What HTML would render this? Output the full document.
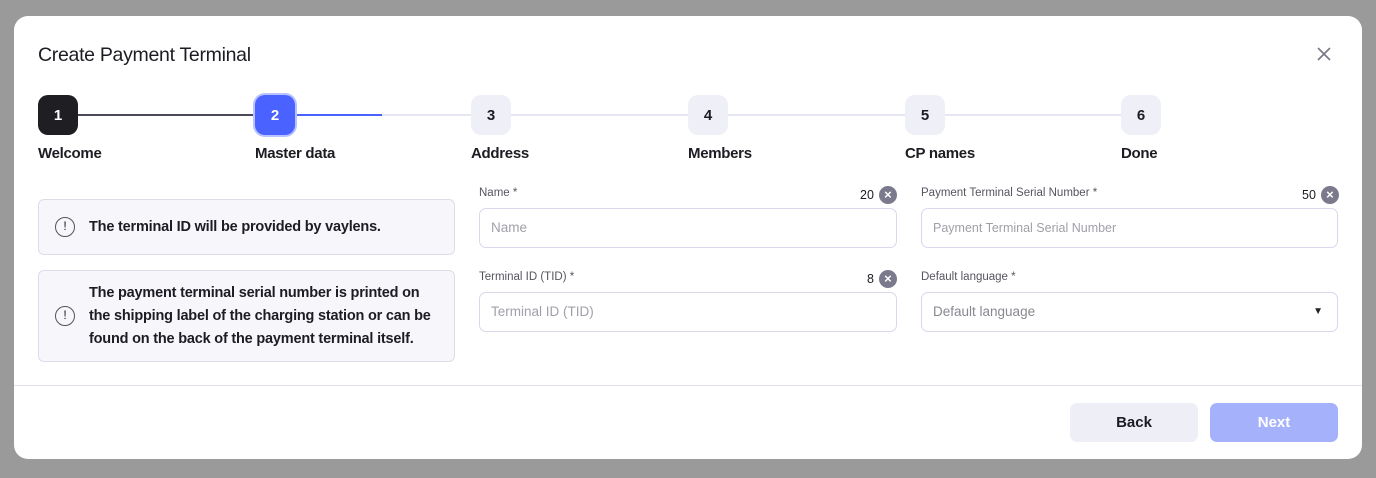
<!DOCTYPE html><html><head><style>
*{box-sizing:border-box;margin:0;padding:0}
body{width:1376px;height:478px;background:#9a9a9a;font-family:"Liberation Sans",sans-serif;position:relative;overflow:hidden;color:#1c1c22}
.m{position:absolute;left:14px;top:16px;width:1348px;height:443px;background:#fff;border-radius:14px}
.a{position:absolute}
.step{position:absolute;top:79px;width:40px;height:40px;border-radius:10px;background:#efeff8;font-weight:bold;font-size:15px;display:flex;align-items:center;justify-content:center}
.lbl{position:absolute;top:129px;font-weight:bold;font-size:15px;letter-spacing:-.3px}
.info{position:absolute;left:24px;width:417px;background:#f6f6fb;border:1px solid #dddde9;border-radius:6px;font-weight:bold;font-size:14.5px;line-height:23px;display:flex;align-items:center;padding-left:50px;padding-right:10px;letter-spacing:-.2px}
.ic{position:absolute;left:16px;top:50%;margin-top:-10px;width:20px;height:20px;border:1.5px solid #555;border-radius:50%;font-size:12px;text-align:center;line-height:17px;font-weight:normal}
.fl{position:absolute;font-size:11.5px;color:#55555f}
.cnt{position:absolute;font-size:12.5px;display:flex;align-items:center;gap:5px}
.x{width:18px;height:18px;border-radius:50%;background:#7a7a8c;color:#fff;font-size:13px;line-height:18px;text-align:center;font-weight:bold}
.in{position:absolute;height:40px;border:1px solid #d8d8ec;border-radius:7px;font-size:13.5px;color:#a0a0a8;padding-left:11px;line-height:38px}
.btn{position:absolute;top:387px;width:128px;height:39px;border-radius:7px;font-weight:bold;font-size:15px;text-align:center;line-height:39px}
</style></head><body>
<div class="m">
<div class="a" style="left:24px;top:28px;font-size:19.5px;letter-spacing:-.3px">Create Payment Terminal</div>
<svg class="a" style="left:1303px;top:31px" width="14" height="14" viewBox="0 0 14 14"><path d="M1 1L13 13M13 1L1 13" stroke="#777788" stroke-width="1.6"/></svg>
<div class="a" style="left:62px;top:98px;width:180px;height:2px;background:#4a4a56"></div>
<div class="a" style="left:280px;top:98px;width:88px;height:2px;background:#4a62ff"></div>
<div class="a" style="left:368px;top:98px;width:740px;height:2px;background:#e6e6f2"></div>
<div class="step" style="left:24px;background:#1f1f23;color:#fff">1</div>
<div class="step" style="left:241px;background:#4a62ff;color:#fff;box-shadow:0 0 0 2px #b8c2ff">2</div>
<div class="step" style="left:457px">3</div>
<div class="step" style="left:674px">4</div>
<div class="step" style="left:891px">5</div>
<div class="step" style="left:1107px">6</div>
<div class="lbl" style="left:24px">Welcome</div>
<div class="lbl" style="left:241px">Master data</div>
<div class="lbl" style="left:457px">Address</div>
<div class="lbl" style="left:674px">Members</div>
<div class="lbl" style="left:891px">CP names</div>
<div class="lbl" style="left:1107px">Done</div>
<div class="info" style="top:183px;height:56px"><span class="ic">!</span>The terminal ID will be provided by vaylens.</div>
<div class="info" style="top:254px;height:92px"><span class="ic">!</span>The payment terminal serial number is printed on the shipping label of the charging station or can be found on the back of the payment terminal itself.</div>
<div class="fl" style="left:465px;top:171px">Name *</div>
<div class="cnt" style="left:846px;top:170px">20<span class="x">×</span></div>
<div class="in" style="left:465px;top:192px;width:418px">Name</div>
<div class="fl" style="left:465px;top:255px">Terminal ID (TID) *</div>
<div class="cnt" style="left:853px;top:254px">8<span class="x">×</span></div>
<div class="in" style="left:465px;top:276px;width:418px">Terminal ID (TID)</div>
<div class="fl" style="left:907px;top:171px">Payment Terminal Serial Number *</div>
<div class="cnt" style="left:1288px;top:170px">50<span class="x">×</span></div>
<div class="in" style="left:907px;top:192px;width:417px;font-size:12.5px">Payment Terminal Serial Number</div>
<div class="fl" style="left:907px;top:255px">Default language *</div>
<div class="in" style="left:907px;top:276px;width:417px;color:#88888f">Default language<span style="position:absolute;right:14px;top:0;color:#222;font-size:10px">▼</span></div>
<div class="a" style="left:0;top:369px;width:1348px;height:1px;background:#e2e2ee"></div>
<div class="btn" style="left:1056px;background:#eeeef7">Back</div>
<div class="btn" style="left:1196px;background:#a6b1fc;color:#fff">Next</div>
</div>
</body></html>
